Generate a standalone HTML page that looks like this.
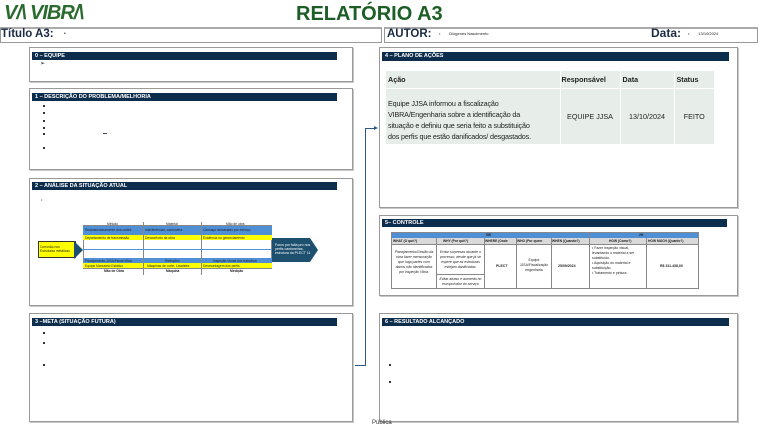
<!DOCTYPE html>
<html><head><meta charset="utf-8"><style>
*{margin:0;padding:0;box-sizing:border-box}
body{width:768px;height:433px;background:#fff;position:relative;overflow:hidden;font-family:"Liberation Sans",sans-serif;color:#222}
.a{position:absolute}
.box{position:absolute;border:1px solid #9a9a9a;box-shadow:1px 1px 0 #c8c8c8;background:#fff}
.hd{position:absolute;background:#0c2d4b;color:#fff;font-size:5.5px;font-weight:bold;line-height:8px;padding-left:3px;white-space:nowrap}
.dot{position:absolute;width:2px;height:2px;background:#333}
.t{position:absolute;font-size:3.3px;white-space:nowrap}
table{border-collapse:collapse}
</style></head><body>
<div class="a" style="left:4px;top:2px;font-size:20px;font-weight:bold;font-style:italic;color:#2c6b2f;letter-spacing:-1px">V/\ VIBR/\</div>
<div class="a" style="left:296px;top:3px;font-size:20px;font-weight:bold;color:#1d5e27">RELATÓRIO A3</div>
<div class="a" style="left:0;top:27px;width:382px;height:16px;border:1px solid #999;border-top:2px solid #aaa"></div>
<div class="a" style="left:1px;top:28px;font-size:11.5px;font-weight:bold;color:#1a2a44">Título A3:</div>
<div class="a" style="left:64px;top:31px;font-size:5px">•</div>
<div class="a" style="left:384px;top:27px;width:374px;height:16px;border:1px solid #999;border-top:2px solid #aaa"></div>
<div class="a" style="left:387px;top:28px;font-size:11.5px;font-weight:bold;color:#1a2a44">AUTOR:</div>
<div class="a" style="left:439px;top:31px;font-size:4px">•&nbsp;&nbsp;&nbsp;&nbsp;&nbsp;&nbsp;&nbsp;&nbsp;Diógenes Nascimento</div>
<div class="a" style="left:651px;top:26px;font-size:12px;font-weight:bold;color:#1a2a44">Data:</div>
<div class="a" style="left:688px;top:31px;font-size:4px">•&nbsp;&nbsp;&nbsp;&nbsp;&nbsp;&nbsp;&nbsp;&nbsp;13/10/2024</div>

<div class="box" style="left:29px;top:47px;width:324px;height:35px"></div>
<div class="hd" style="left:32px;top:52px;width:305px">0 – EQUIPE</div>
<div class="a" style="left:40px;top:60px;font-size:6px">➢</div>

<div class="box" style="left:29px;top:88px;width:324px;height:82px"></div>
<div class="hd" style="left:32px;top:93px;width:305px">1 – DESCRIÇÃO DO PROBLEMA/MELHORIA</div>
<div class="dot" style="left:43px;top:105px"></div><div class="dot" style="left:43px;top:112px"></div><div class="dot" style="left:43px;top:120px"></div><div class="dot" style="left:43px;top:127px"></div><div class="dot" style="left:43px;top:133px"></div><div class="dot" style="left:43px;top:147px"></div>
<div class="a" style="left:103px;top:133px;width:4px;height:1px;background:#446"></div>

<div class="box" style="left:29px;top:178px;width:324px;height:128px"></div>
<div class="hd" style="left:32px;top:182px;width:305px">2 – ANÁLISE DA SITUAÇÃO ATUAL</div>
<div class="a" style="left:41px;top:197px;font-size:4px">•</div>
<!-- fishbone -->
<div class="a" style="left:83px;top:222px;width:189px;height:53px;border:1px solid #888"></div>
<div class="a" style="left:83px;top:222px;width:189px;height:4px;background:#fff;border-bottom:1px solid #888"></div>
<div class="a" style="left:83px;top:226px;width:189px;height:9px;background:#4f8fd6"></div>
<div class="a" style="left:83px;top:235px;width:189px;height:5px;background:#ffff00"></div>
<div class="a" style="left:83px;top:258px;width:189px;height:5px;background:#4f8fd6"></div>
<div class="a" style="left:83px;top:263px;width:189px;height:5px;background:#ffff00"></div>
<div class="a" style="left:83px;top:268px;width:189px;height:7px;background:#fff;border-top:1px solid #888"></div>
<div class="a" style="left:143px;top:222px;width:1px;height:53px;background:#888"></div>
<div class="a" style="left:201px;top:222px;width:1px;height:53px;background:#888"></div>
<div class="a" style="left:83px;top:249px;width:190px;height:1px;background:#4f8fd6"></div>
<div class="t" style="left:107px;top:222px">Método</div>
<div class="t" style="left:166px;top:222px">Material</div>
<div class="t" style="left:226px;top:222px">Mão de obra</div>
<div class="t" style="left:85px;top:228px">Redimensionamento dos cortes</div>
<div class="t" style="left:145px;top:228px">Interferências, cantoneira</div>
<div class="t" style="left:203px;top:228px">Cansaço demasiado por esforço</div>
<div class="t" style="left:85px;top:236px">Departamento de transmissão</div>
<div class="t" style="left:145px;top:236px">Desconforto da obra</div>
<div class="t" style="left:203px;top:236px">Evidência no gerenciamento</div>
<div class="t" style="left:85px;top:259px">Planejamento JJSA/Fiscal Vibra</div>
<div class="t" style="left:165px;top:259px">Refeições</div>
<div class="t" style="left:213px;top:259px">Inspeção Visual dos trabalhos</div>
<div class="t" style="left:85px;top:264px">Equipe Manuseio Estático</div>
<div class="t" style="left:147px;top:264px">Máquinas de corte, Lixadeira</div>
<div class="t" style="left:203px;top:264px">Desmontagem dos perfis</div>
<div class="t" style="left:104px;top:269px;font-weight:bold">Mão de Obra</div>
<div class="t" style="left:166px;top:269px;font-weight:bold">Máquina</div>
<div class="t" style="left:230px;top:269px;font-weight:bold">Medição</div>
<div class="a" style="left:38px;top:241px;width:38px;height:17px;background:#ffff00;border:1px solid #333"></div>
<div class="t" style="left:40px;top:245px;line-height:4px">Corrosão nos<br>Estruturas metálicas</div>
<div class="a" style="left:74px;top:241px;width:0;height:0;border-top:9px solid transparent;border-bottom:9px solid transparent;border-left:9px solid #1d4f6e"></div>
<div class="a" style="left:272px;top:238px;width:38px;height:24px;background:#1d4f6e"></div>
<div class="a" style="left:310px;top:238px;width:0;height:0;border-top:12px solid transparent;border-bottom:12px solid transparent;border-left:8px solid #1d4f6e"></div>
<div class="a" style="left:275px;top:243px;font-size:3.5px;color:#fff;line-height:4px">Furos por falta pro nos<br>perfis cantoneiras,<br>estrutura da PLECT 11</div>

<div class="box" style="left:29px;top:313px;width:324px;height:109px"></div>
<div class="hd" style="left:32px;top:318px;width:305px">3 –META (SITUAÇÃO FUTURA)</div>
<div class="dot" style="left:43px;top:332px"></div><div class="dot" style="left:43px;top:342px"></div><div class="dot" style="left:43px;top:364px"></div>

<div class="box" style="left:379px;top:47px;width:359px;height:161px"></div>
<div class="hd" style="left:382px;top:52px;width:347px;line-height:9px">4 – PLANO DE AÇÕES</div>
<table class="a" style="left:386px;top:71px;width:328px;background:#e7eeea;font-size:7.2px;color:#222">
<tr style="height:17px;font-weight:bold"><td style="width:174px;padding-left:2px;border-right:1px solid #fff;border-bottom:1px solid #fff">Ação</td><td style="width:60px;padding-left:1px;border-right:1px solid #fff;border-bottom:1px solid #fff">Responsável</td><td style="width:54px;padding-left:2px;border-right:1px solid #fff;border-bottom:1px solid #fff">Data</td><td style="padding-left:2px;border-bottom:1px solid #fff">Status</td></tr>
<tr style="height:56px"><td style="padding:8px 2px 0;line-height:11px;border-right:1px solid #fff;font-size:7.2px;white-space:nowrap;letter-spacing:-0.15px;overflow:hidden;max-width:174px">Equipe JJSA informou a fiscalização<br>VIBRA/Engenharia sobre a identificação da<br>situação e definiu que seria feito a substituição<br>dos perfis que estão danificados/ desgastados.</td><td style="text-align:center;border-right:1px solid #fff">EQUIPE JJSA</td><td style="text-align:center;border-right:1px solid #fff">13/10/2024</td><td style="text-align:center">FEITO</td></tr>
</table>

<div class="box" style="left:379px;top:215px;width:359px;height:81px"></div>
<div class="hd" style="left:382px;top:219px;width:345px;line-height:8px">5– CONTROLE</div>
<div class="a" style="left:391px;top:232px;width:308px;height:57px;border:1px solid #888;background:#fff"></div>
<div class="a" style="left:392px;top:233px;width:306px;height:5px;background:#4f8fd6"></div>
<div class="t" style="left:486px;top:233px;font-weight:bold">5W</div>
<div class="t" style="left:639px;top:233px;font-weight:bold">2H</div>
<div class="a" style="left:392px;top:238px;width:306px;height:7px;background:#d9d9d9;border-bottom:1px solid #888"></div>
<div class="t" style="left:393px;top:239px;font-weight:bold">WHAT (O quê?)</div>
<div class="t" style="left:443px;top:239px;font-weight:bold">WHY (Por quê?)</div>
<div class="t" style="left:485px;top:239px;font-weight:bold">WHERE (Onde</div>
<div class="t" style="left:517px;top:239px;font-weight:bold">WHO (Por quem</div>
<div class="t" style="left:552px;top:239px;font-weight:bold">WHEN (Quando?)</div>
<div class="t" style="left:609px;top:239px;font-weight:bold">HOW (Como?)</div>
<div class="t" style="left:648px;top:239px;font-weight:bold">HOW MUCH (Quanto?)</div>
<div class="a" style="left:436px;top:238px;width:1px;height:51px;background:#888"></div>
<div class="a" style="left:484px;top:238px;width:1px;height:51px;background:#888"></div>
<div class="a" style="left:516px;top:238px;width:1px;height:51px;background:#888"></div>
<div class="a" style="left:551px;top:238px;width:1px;height:51px;background:#888"></div>
<div class="a" style="left:589px;top:233px;width:1px;height:56px;background:#888"></div>
<div class="a" style="left:646px;top:238px;width:1px;height:51px;background:#888"></div>
<div class="a" style="left:437px;top:274px;width:47px;height:1px;background:#888"></div>
<div class="a" style="left:393px;top:250px;width:42px;font-size:3.5px;font-style:italic;text-align:center;line-height:5px">Planejamento/Gestão da obra fazer mensuração que haja partes com danos não identificados por inspeção Vibra.</div>
<div class="a" style="left:438px;top:250px;width:45px;font-size:3.5px;font-style:italic;text-align:center;line-height:5px">Evitar surpresas durante o processo, desde que já se espere que as estruturas estejam danificadas.</div>
<div class="a" style="left:438px;top:277px;width:45px;font-size:3.5px;font-style:italic;text-align:center;line-height:5px">Evitar atraso e aumento no escopo/valor do serviço</div>
<div class="a" style="left:496px;top:264px;font-size:3.5px;font-weight:bold">PLECT</div>
<div class="a" style="left:518px;top:258px;width:32px;font-size:3.5px;text-align:center;line-height:5px">Equipe JJSA/Fiscalização engenharia</div>
<div class="a" style="left:558px;top:264px;font-size:3.5px;font-weight:bold">25/09/2024</div>
<div class="a" style="left:592px;top:246px;width:52px;font-size:3.5px;line-height:5px">• Fazer inspeção visual, levantando o material a ser substituído.<br>• Aquisição do material e substituição.<br>• Tratamento e pintura.</div>
<div class="a" style="left:660px;top:264px;font-size:3.5px;font-weight:bold">R$ 311.438,00</div>

<div class="box" style="left:379px;top:313px;width:359px;height:109px"></div>
<div class="hd" style="left:382px;top:318px;width:347px;line-height:8px">6 – RESULTADO ALCANÇADO</div>
<div class="dot" style="left:389px;top:364px"></div><div class="dot" style="left:389px;top:381px"></div>

<!-- connector -->
<div class="a" style="left:355px;top:365px;width:11px;height:1px;background:#2b5a86"></div>
<div class="a" style="left:365px;top:128px;width:1px;height:238px;background:#2b5a86"></div>
<div class="a" style="left:365px;top:128px;width:10px;height:1px;background:#2b5a86"></div>
<div class="a" style="left:374px;top:126px;width:0;height:0;border-top:2.5px solid transparent;border-bottom:2.5px solid transparent;border-left:4px solid #2b5a86"></div>
<div class="a" style="left:372px;top:420px;font-size:6px;color:#333">Pública</div>
</body></html>
